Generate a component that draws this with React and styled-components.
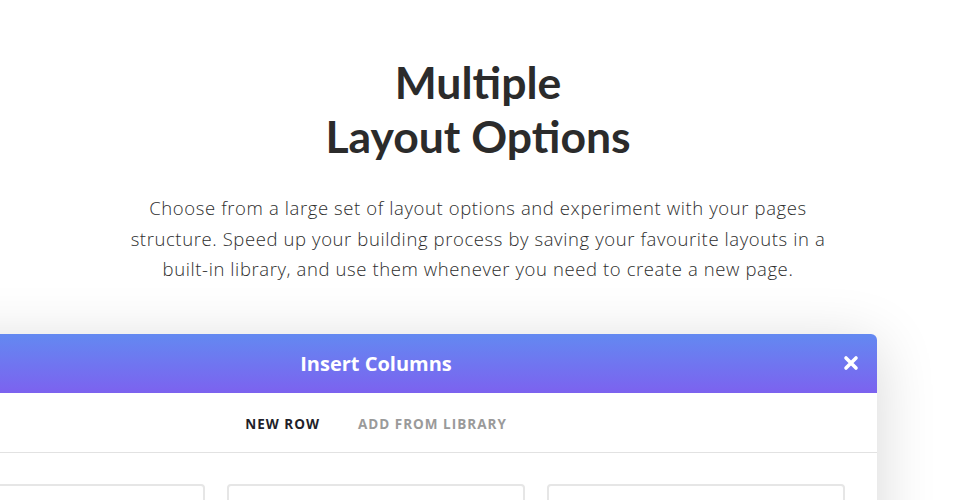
import styled, { createGlobalStyle } from "styled-components";

const Global = createGlobalStyle`
    html, body {
        margin: 0;
        padding: 0;
        background: #fff;
        overflow: hidden;
    }
    body {
        width: 965px;
        height: 500px;
    }
`;

const Page = styled.section`
    display: flex;
    flex-direction: column;
    align-items: center;
    padding: 55px 9px 0 0;
`;

const Title = styled.h2`
    margin: 0;
    font-family: Lato, "Liberation Sans", sans-serif;
    font-weight: 700;
    font-size: 44.5px;
    line-height: 54px;
    color: #2b2b2b;
    text-align: center;
`;

const Lead = styled.p`
    margin: 30px 0 0;
    font-family: "Open Sans", "Liberation Sans", sans-serif;
    font-weight: 300;
    font-size: 18.5px;
    letter-spacing: 0.6px;
    line-height: 30.5px;
    color: #2e2e2e;
    text-align: center;
`;

const ModalRow = styled.div`
    align-self: stretch;
    margin-top: 49px;
    margin-left: -125px;
`;

const Modal = styled.div`
    width: 1002px;
    background: #fff;
    border-radius: 6px 6px 0 0;
    box-shadow: 0 10px 60px rgba(0, 0, 0, 0.16);
`;

const Header = styled.header`
    position: relative;
    height: 59px;
    display: flex;
    align-items: center;
    justify-content: center;
    border-radius: 6px 6px 0 0;
    background: linear-gradient(180deg, #6389f1 0%, #7c62ef 100%);
`;

const HeaderTitle = styled.h3`
    margin: 0;
    font-family: "Open Sans", "Liberation Sans", sans-serif;
    font-weight: 700;
    font-size: 20px;
    color: #fff;
`;

const Close = styled.button`
    position: absolute;
    right: 18px;
    top: 50%;
    transform: translateY(-50%);
    display: flex;
    padding: 0;
    border: 0;
    background: none;
    cursor: pointer;
`;

const Tabs = styled.nav`
    height: 60px;
    padding-top: 3px;
    box-sizing: border-box;
    display: flex;
    align-items: center;
    justify-content: center;
    gap: 38px;
    border-bottom: 1px solid #e2e2e2;
`;

const Tab = styled.span`
    font-family: "Open Sans", "Liberation Sans", sans-serif;
    font-weight: 700;
    font-size: 13.5px;
    letter-spacing: 1px;
    color: ${({ $active }) => ($active ? "#1f1f2a" : "#9a9a9a")};
`;

const Cards = styled.div`
    display: grid;
    grid-template-columns: repeat(3, 298px);
    gap: 22px;
    padding: 31px 32px 40px;
`;

const Card = styled.div`
    height: 120px;
    border: 2px solid #e6e6e6;
    border-radius: 4px;
    box-sizing: border-box;
`;

const CloseIcon = () => (
    <svg width="16" height="16" viewBox="0 0 16 16">
        <path
            d="M3 3 L13 13 M13 3 L3 13"
            stroke="#fff"
            strokeWidth="3.6"
            strokeLinecap="round"
        />
    </svg>
);

export default function App() {
    return (
        <>
            <Global />
            <Page>
                <Title>
                    Multiple
                    <br />
                    Layout Options
                </Title>
                <Lead>
                    Choose from a large set of layout options and experiment with your pages
                    <br />
                    structure. Speed up your building process by saving your favourite layouts in a
                    <br />
                    built-in library, and use them whenever you need to create a new page.
                </Lead>
                <ModalRow>
                    <Modal>
                        <Header>
                            <HeaderTitle>Insert Columns</HeaderTitle>
                            <Close aria-label="Close">
                                <CloseIcon />
                            </Close>
                        </Header>
                        <Tabs>
                            <Tab $active>NEW ROW</Tab>
                            <Tab>ADD FROM LIBRARY</Tab>
                        </Tabs>
                        <Cards>
                            <Card />
                            <Card />
                            <Card />
                        </Cards>
                    </Modal>
                </ModalRow>
            </Page>
        </>
    );
}
